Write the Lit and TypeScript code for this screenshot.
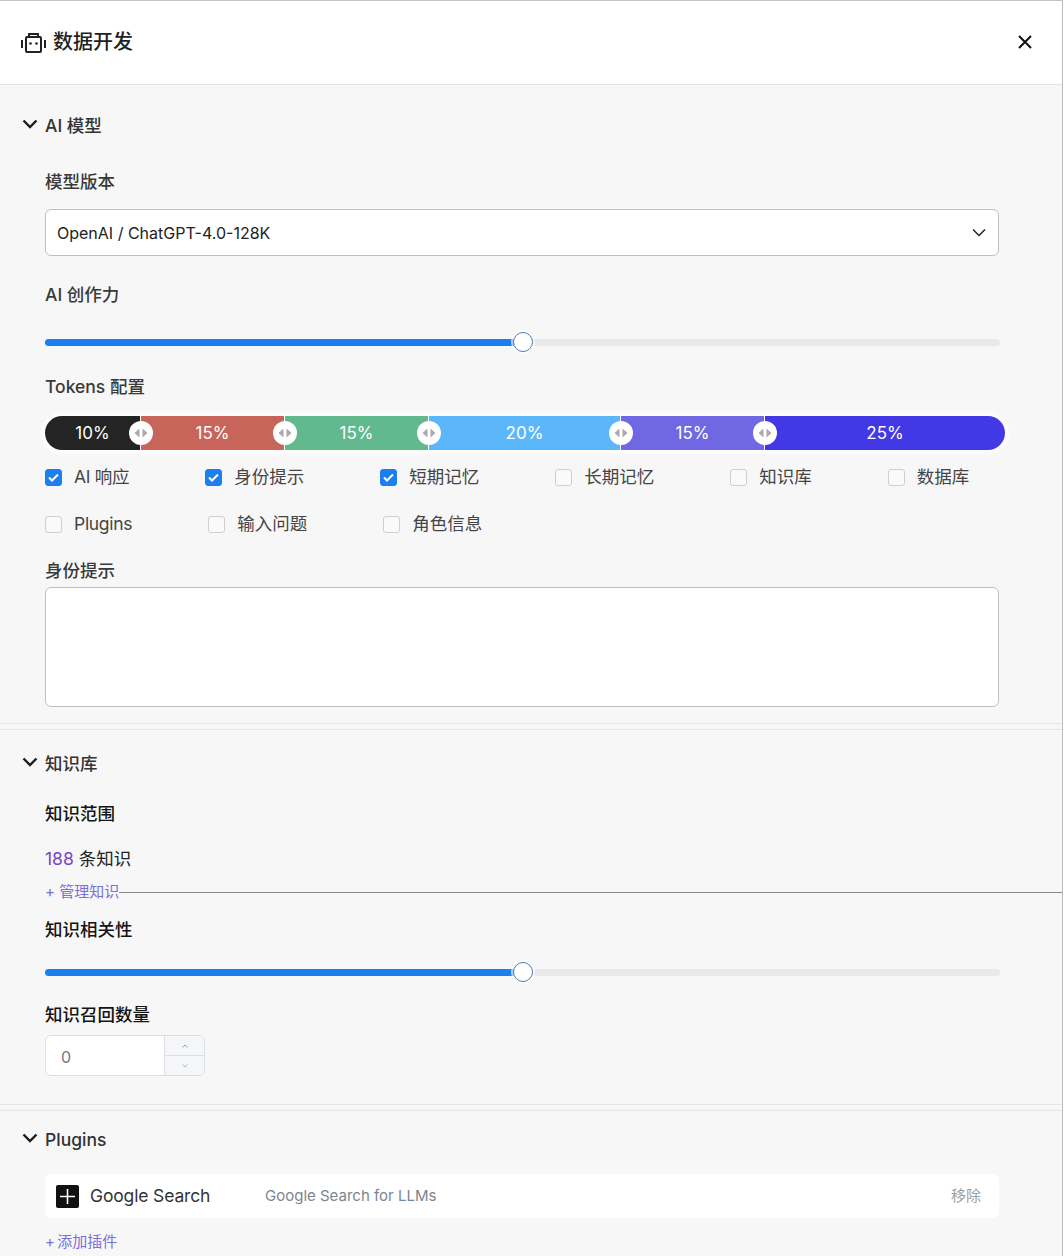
import { LitElement, html, css, svg } from "lit";
import { customElement } from "lit/decorators.js";

const segs = [
  { p: 10, c: "#242424" },
  { p: 15, c: "#c8655a" },
  { p: 15, c: "#62b98e" },
  { p: 20, c: "#5cb6fa" },
  { p: 15, c: "#6f68e2" },
  { p: 25, c: "#4338e6" },
];
const checks: [string, boolean, boolean][] = [
  ["AI 响应", true, true],
  ["身份提示", true, false],
  ["短期记忆", true, false],
  ["长期记忆", false, false],
  ["知识库", false, false],
  ["数据库", false, false],
  ["Plugins", false, true],
  ["输入问题", false, false],
  ["角色信息", false, false],
];

const chevron = svg`<svg class="chev" viewBox="0 0 16 12" width="16" height="12"><path d="M1.5 2.5 8 9l6.5-6.5" fill="none" stroke="#1c1c1c" stroke-width="2.4"/></svg>`;

@customElement("app-root")
export class AppRoot extends LitElement {
  static styles = css`
    :host {
      display: block;
      width: 1064px;
      height: 1256px;
      overflow: hidden;
      box-sizing: border-box;
      font-family: Inter, "Noto Sans CJK SC", sans-serif;
      font-size: 17.5px;
      line-height: 24px;
      color: #333;
      background: #fff;
    }
    .frame {
      width: 1063px;
      height: 1256px;
      box-sizing: border-box;
      border-top: 1px solid #c4c4c4;
      border-right: 1px solid #bdbdbd;
      background: #f7f7f8;
      overflow: hidden;
    }
    .top {
      height: 81px;
      padding: 0 30px 2px 20px;
      background: #fff;
      border-bottom: 1px solid #e2e2e2;
      display: flex;
      align-items: center;
    }
    .title {
      font-size: 20px;
      font-weight: 500;
      color: #222;
      margin-left: 7px;
      flex: 1;
    }
    .section {
      padding: 0 0 0 45px;
      border-bottom: 1px solid #e4e4e4;
      position: relative;
    }
    .s1 { padding-top: 29px; padding-bottom: 16px; }
    .s2 {
      padding-top: 22px;
      padding-bottom: 28px;
      border-top: 1px solid #e4e4e4;
      margin-top: 5px;
    }
    .s3 {
      padding-top: 17px;
      border-top: 1px solid #e4e4e4;
      border-bottom: none;
      margin-top: 5px;
    }
    .head {
      display: flex;
      align-items: center;
      color: #333;
      font-weight: 500;
      position: relative;
    }
    .chev { position: absolute; left: -23px; top: 4px; }
    .label { font-weight: 500; color: #3a3a3a; }
    .label.dark { color: #141414; }
    .m32 { margin-top: 32px; }
    .m26 { margin-top: 26px; }
    .m14 { margin-top: 14px; }
    .m21 { margin-top: 21px; }
    .select {
      width: 954px;
      height: 47px;
      margin-top: 15px;
      box-sizing: border-box;
      background: #fff;
      border: 1px solid #c0c0c0;
      border-radius: 6px;
      display: flex;
      align-items: center;
      justify-content: space-between;
      padding: 0 12px 0 11px;
      color: #222;
      font-size: 16px;
    }
    .m28 { margin-top: 27px; }
    .slider {
      width: 955px;
      height: 20px;
      position: relative;
      display: flex;
      align-items: center;
    }
    .sl1 { margin-top: 25px; }
    .sl2 { margin-top: 20px; }
    .track {
      flex: 1;
      height: 7px;
      border-radius: 4px;
      background: #e9e9e9;
      overflow: hidden;
    }
    .fill { height: 100%; background: #1b7ff0; }
    .thumb {
      position: absolute;
      top: 0;
      box-sizing: border-box;
      width: 20px;
      height: 20px;
      margin-left: -10px;
      border-radius: 50%;
      background: #fff;
      border: 1.5px solid #4a7fb5;
      box-shadow: 0 0 0 2px rgba(255, 255, 255, 0.6);
    }
    .bar {
      width: 960px;
      height: 34px;
      margin-top: 17px;
      display: flex;
      border-radius: 17px;
      position: relative;
      box-shadow: 0 0 4px 3px #fff;
    }
    .seg {
      display: flex;
      align-items: center;
      justify-content: center;
      color: #fff;
      font-size: 17px;
      box-sizing: border-box;
      position: relative;
      border-right: 1px solid #fff;
    }
    .seg:first-child { border-radius: 17px 0 0 17px; }
    .seg:last-child { border-radius: 0 17px 17px 0; border-right: none; }
    .grip {
      position: absolute;
      right: -12.5px;
      top: 5px;
      width: 24px;
      height: 24px;
      border-radius: 50%;
      background: #fff;
      display: flex;
      align-items: center;
      justify-content: center;
      z-index: 1;
    }
    .checks {
      width: 960px;
      margin-top: 15px;
      display: flex;
      flex-wrap: wrap;
      column-gap: 76px;
      row-gap: 23px;
    }
    .check { display: flex; align-items: center; gap: 12px; color: #444; }
    .tight { letter-spacing: -0.3px; }
    .box {
      width: 17px;
      height: 17px;
      box-sizing: border-box;
      border-radius: 3px;
      border: 1px solid #cfcfcf;
      background: #fafafa;
      display: flex;
      align-items: center;
      justify-content: center;
    }
    .box.on { background: #1b7ff0; border-color: #1b7ff0; }
    .m23 { margin-top: 23px; }
    .textarea {
      width: 954px;
      height: 120px;
      margin-top: 4px;
      box-sizing: border-box;
      background: #fff;
      border: 1px solid #c0c0c0;
      border-radius: 6px;
    }
    .count { margin-top: 21px; color: #222; }
    .num { color: #7a45c4; margin-right: 5px; }
    .manage {
      margin: 9px -20px 0 0;
      display: flex;
      align-items: center;
    }
    .link { color: #7a70d8; font-size: 15px; white-space: nowrap; }
    .rule { flex: 1; height: 1px; background: #8a8a8a; }
    .stepper {
      margin-top: 8px;
      width: 160px;
      height: 41px;
      box-sizing: border-box;
      border: 1px solid #dedfe3;
      border-radius: 6px;
      background: #fff;
      display: flex;
      overflow: hidden;
    }
    .stepper .val {
      flex: 1;
      padding-left: 15px;
      line-height: 42px;
      color: #777;
      font-size: 16px;
    }
    .arrows {
      width: 40px;
      box-sizing: border-box;
      border-left: 1px solid #dedfe3;
      background: #f5f6f8;
      display: flex;
      flex-direction: column;
    }
    .arrows div {
      flex: 1;
      display: flex;
      align-items: center;
      justify-content: center;
    }
    .arrows div + div { border-top: 1px solid #dedfe3; }
    .plugin {
      width: 954px;
      height: 44px;
      margin-top: 22px;
      box-sizing: border-box;
      background: #fff;
      border-radius: 6px;
      display: flex;
      align-items: center;
      padding: 0 18px 0 11px;
    }
    .logo {
      width: 23px;
      height: 23px;
      background: #111;
      border-radius: 2px;
      display: flex;
      align-items: center;
      justify-content: center;
    }
    .pname { margin-left: 11px; width: 175px; color: #333; letter-spacing: -0.15px; }
    .pdesc { flex: 1; font-size: 15px; color: #7d8590; }
    .remove { font-size: 15px; color: #9a9ea6; }
    .add { margin-top: 12px; word-spacing: -2px; }
  `;

  private slider(cls: string) {
    return html`<div class="slider ${cls}">
      <div class="track"><div class="fill" style="width:50%"></div></div>
      <div class="thumb" style="left:50%"></div>
    </div>`;
  }

  render() {
    return html`<div class="frame">
      <div class="top">
        <svg width="26" height="24" viewBox="0 0 26 24">
          <g fill="none" stroke="#222" stroke-width="2">
            <rect x="6" y="7" width="15" height="15" rx="1"></rect>
            <path d="M9 7V4h9v3"></path>
            <path d="M2 10v8M25 10v8"></path>
          </g>
          <circle cx="10.5" cy="13.5" r="1.3" fill="#222"></circle>
          <circle cx="16.5" cy="13.5" r="1.3" fill="#222"></circle>
        </svg>
        <div class="title">数据开发</div>
        <svg width="14" height="14" viewBox="0 0 14 14">
          <path d="M1 1l12 12M13 1L1 13" stroke="#111" stroke-width="2" fill="none"></path>
        </svg>
      </div>

      <div class="section s1">
        <div class="head">${chevron}AI 模型</div>
        <div class="label m32">模型版本</div>
        <div class="select">
          <span>OpenAI / ChatGPT-4.0-128K</span>
          <svg width="14" height="9" viewBox="0 0 14 9">
            <path d="M1 1.5l6 6 6-6" fill="none" stroke="#222" stroke-width="1.5"></path>
          </svg>
        </div>
        <div class="label m28">AI 创作力</div>
        ${this.slider("sl1")}
        <div class="label m23">Tokens 配置</div>
        <div class="bar">
          ${segs.map(
            (s, i) => html`<div class="seg" style="width:${s.p}%;background:${s.c}">
              ${s.p}%
              ${i < segs.length - 1
                ? html`<span class="grip">
                    <svg width="14" height="10" viewBox="0 0 14 10">
                      <path d="M5.5 0.5v9L0.5 5zM8.5 0.5v9l5-4.5z" fill="#a9a9a9"></path>
                    </svg>
                  </span>`
                : ""}
            </div>`
          )}
        </div>
        <div class="checks">
          ${checks.map(
            ([t, on, latin]) => html`<div class="check">
              <span class="box ${on ? "on" : ""}">
                ${on
                  ? html`<svg width="11" height="9" viewBox="0 0 11 9">
                      <path d="M1 4.5l3 3 6-6" fill="none" stroke="#fff" stroke-width="2"></path>
                    </svg>`
                  : ""}
              </span>
              <span class="${latin ? "tight" : ""}">${t}</span>
            </div>`
          )}
        </div>
        <div class="label m23">身份提示</div>
        <div class="textarea"></div>
      </div>

      <div class="section s2">
        <div class="head">${chevron}知识库</div>
        <div class="label dark m26">知识范围</div>
        <div class="count"><span class="num">188</span>条知识</div>
        <div class="manage"><span class="link">+ 管理知识</span><span class="rule"></span></div>
        <div class="label dark m14">知识相关性</div>
        ${this.slider("sl2")}
        <div class="label dark m21">知识召回数量</div>
        <div class="stepper">
          <div class="val">0</div>
          <div class="arrows">
            <div><svg width="6" height="4" viewBox="0 0 6 4"><path d="M.5 3.5L3 1l2.5 2.5" fill="none" stroke="#9a9a9a"></path></svg></div>
            <div><svg width="6" height="4" viewBox="0 0 6 4"><path d="M.5.5L3 3 5.5.5" fill="none" stroke="#b5b5b5"></path></svg></div>
          </div>
        </div>
      </div>

      <div class="section s3">
        <div class="head">${chevron}Plugins</div>
        <div class="plugin">
          <div class="logo">
            <svg width="15" height="15" viewBox="0 0 15 15">
              <path d="M7.5 0v15M0 7.5h15" stroke="#fff" stroke-width="1.6"></path>
            </svg>
          </div>
          <div class="pname">Google Search</div>
          <div class="pdesc">Google Search for LLMs</div>
          <div class="remove">移除</div>
        </div>
        <div class="link add">+ 添加插件</div>
      </div>
    </div>`;
  }
}
